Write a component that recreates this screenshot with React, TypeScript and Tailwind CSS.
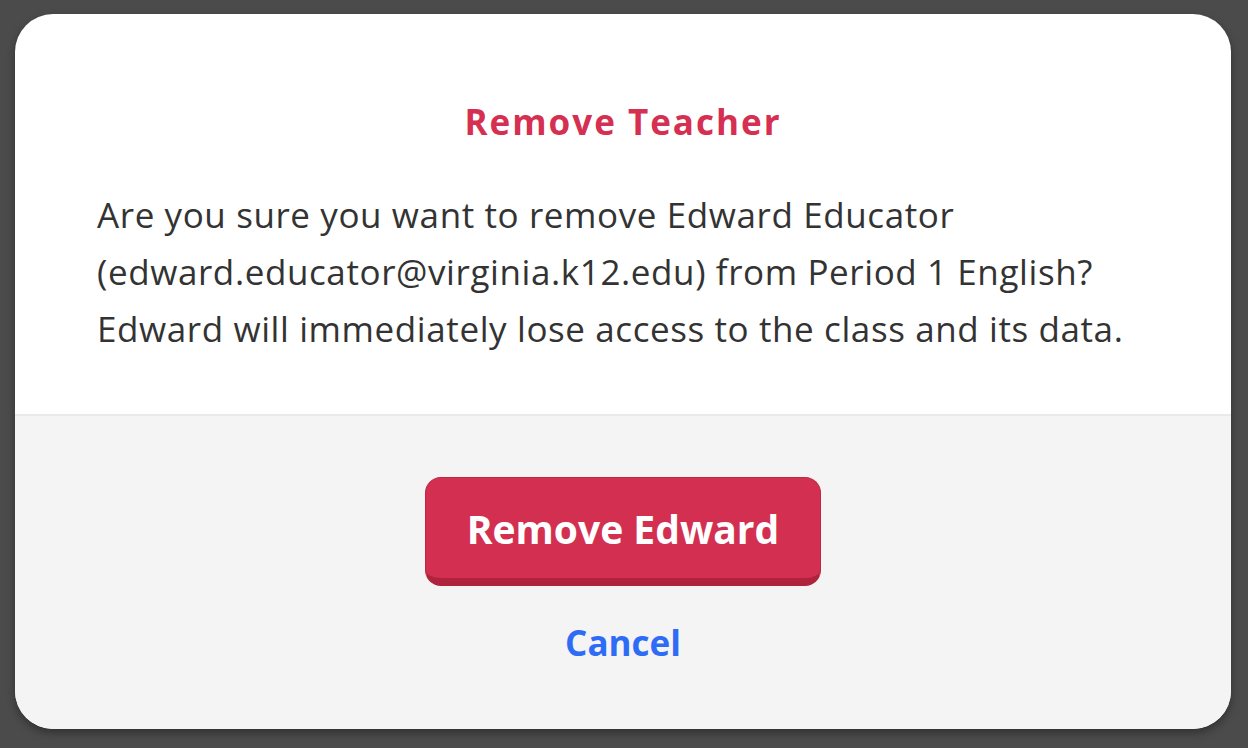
import React from 'react';

const App: React.FC = () => {
  return (
    <div className="min-h-screen w-full bg-[#4b4b4b] pt-[14px] px-[15px] pb-[19px] font-['Open_Sans','Noto_Sans',sans-serif]">
      <div className="w-[1216px] h-[715px] flex flex-col rounded-[38px] overflow-hidden bg-white shadow-[0_4px_8px_rgba(0,0,0,0.35)]">
        <div className="pt-[84px] pb-[57px] px-[82px] border-b-2 border-[#e9e9e9]">
          <h1 className="text-center text-[35px] leading-[48px] font-bold tracking-[2px] text-[#d52f51]">Remove Teacher</h1>
          <p className="mt-[40px] text-[35px] leading-[57px] tracking-[0.6px] text-[#333333] whitespace-nowrap">
            <span className="block">Are you sure you want to remove Edward Educator</span>
            <span className="block">(edward.educator@virginia.k12.edu) from Period 1 English?</span>
            <span className="block">Edward will immediately lose access to the class and its data.</span>
          </p>
        </div>
        <div className="flex-1 bg-[#f4f4f4] flex flex-col items-center pt-[61px]">
          <button className="w-[396px] h-[109px] rounded-[16px] bg-[#d33051] border border-[#c02645] border-b-[8px] border-b-[#b0233c] text-white text-[39px] font-bold leading-none">
            Remove Edward
          </button>
          <button className="mt-[37px] text-[35px] leading-[40px] font-bold text-[#2f6cf6]">Cancel</button>
        </div>
      </div>
    </div>
  );
};

export default App;
